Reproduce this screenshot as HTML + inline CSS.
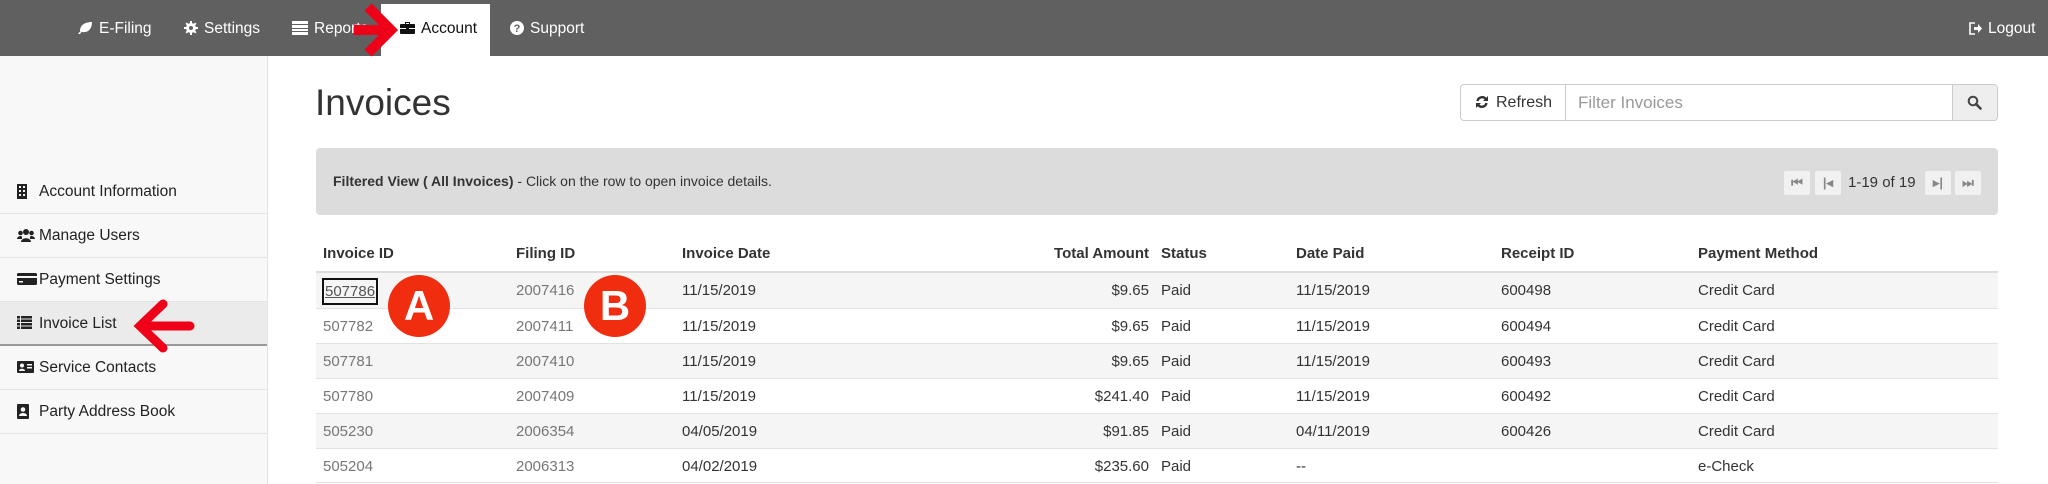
<!DOCTYPE html>
<html><head><meta charset="utf-8"><style>
*{margin:0;padding:0;box-sizing:border-box}
body{width:2048px;height:484px;overflow:hidden;background:#fff;font-family:"Liberation Sans",Arial,sans-serif;color:#333;position:relative}
.abs{position:absolute}
.nav{left:0;top:0;width:2048px;height:56px;background:#606060}
.ni{position:absolute;top:0;height:56px;line-height:58px;color:#fff;font-size:15.5px;white-space:nowrap}
.ni svg{vertical-align:-2px;margin-right:6px}
.acct{left:381px;top:4px;width:109px;height:52px;background:#fff}
.side{left:0;top:56px;width:268px;height:428px;background:#f8f8f8;border-right:1px solid #e3e3e3}
.si{position:absolute;left:0;width:267px;height:44px;border-bottom:1px solid #e3e3e3;font-size:15.5px;color:#222;line-height:44px;padding-left:39px}
.si svg{position:absolute;left:17px;top:14px}
.th{position:absolute;top:245px;font-size:15px;font-weight:bold;color:#333}
.row{position:absolute;left:316px;width:1682px;height:35px;border-top:1px solid #e2e2e2;font-size:15px;line-height:35px}
.row span{position:absolute;top:0}
.g{color:#777}
.pb{position:absolute;top:171px;width:26px;height:24px;background:#f1f1f1;border-radius:2px;color:#888;font-size:13px;line-height:24px;text-align:center;font-weight:bold}
.badge{position:absolute;width:62px;height:62px;border-radius:50%;background:#f02d0e;color:#fff;font-weight:bold;font-size:42px;text-align:center;line-height:62px}
</style></head><body>
<div class="abs nav"></div>
<div class="abs acct"></div>
<div class="ni" style="left:77px"><svg width="16" height="14" viewBox="0 0 16 14"><path d="M1 13C4 9 8 6 12 5C8 7 5 10 3 13ZM3 10C3 4 8 1 15 1C15 8 11 12 5 11Z" fill="#fff"/></svg>E-Filing</div>
<div class="ni" style="left:184px"><svg width="14" height="14" viewBox="0 0 14 14"><circle cx="7" cy="7" r="5" fill="#fff"/><path d="M6 0h2v14h-2zM0 6h14v2h-14z" fill="#fff"/><path d="M1.5 2.9l1.4-1.4 9.6 9.6-1.4 1.4zM11.1 1.5l1.4 1.4-9.6 9.6-1.4-1.4z" fill="#fff"/><circle cx="7" cy="7" r="2" fill="#606060"/></svg>Settings</div>
<div class="ni" style="left:292px"><svg width="16" height="14" viewBox="0 0 16 14"><path d="M0 0h16v3H0zM0 4h16v3H0zM0 8h16v2H0zM0 11h16v3H0z" fill="#fff"/></svg>Reports</div>
<div class="ni" style="left:400px;color:#111"><svg width="15" height="14" viewBox="0 0 15 14"><path d="M5 1h5v2H9V2H6v1H5z" fill="#111"/><rect x="0" y="3" width="15" height="10" rx="1" fill="#111"/><rect x="0" y="7" width="15" height="1" fill="#fff"/><rect x="6" y="6" width="3" height="3" fill="#111"/></svg>Account</div>
<div class="ni" style="left:510px"><svg width="14" height="14" viewBox="0 0 14 14"><circle cx="7" cy="7" r="7" fill="#fff"/><text x="7" y="11" font-size="11" font-weight="bold" text-anchor="middle" fill="#606060" font-family="Liberation Sans">?</text></svg>Support</div>
<div class="ni" style="left:1969px"><svg width="13" height="13" viewBox="0 0 13 13"><path d="M6 1H1v11h5" stroke="#fff" stroke-width="1.6" fill="none"/><path d="M5 5h4V2l4 4.5-4 4.5V8H5z" fill="#fff"/></svg>Logout</div>
<svg class="abs" style="left:352px;top:0" width="52" height="60"><path d="M2 30H36M16 7L39 30L16 53" stroke="#f00018" stroke-width="10" fill="none"/></svg>

<div class="abs side"></div>
<div class="si" style="top:170px"><svg width="10" height="16" viewBox="0 0 10 16"><rect width="10" height="15" fill="#222"/><path d="M2 2h2v2H2zM6 2h2v2H6zM2 6h2v2H2zM6 6h2v2H6zM2 10h2v2H2zM6 10h2v2H6z" fill="#f8f8f8"/></svg>Account Information</div>
<div class="si" style="top:214px"><svg width="18" height="14" viewBox="0 0 18 14"><circle cx="9" cy="4" r="3" fill="#222"/><circle cx="3.5" cy="5" r="2.3" fill="#222"/><circle cx="14.5" cy="5" r="2.3" fill="#222"/><path d="M4 14c0-5 10-5 10 0zM0 11c0-3 5-4 5-2v2zM18 11c0-3-5-4-5-2v2z" fill="#222"/></svg>Manage Users</div>
<div class="si" style="top:258px"><svg width="20" height="14" viewBox="0 0 20 14"><rect y="1" width="20" height="12" rx="1.5" fill="#222"/><rect y="4" width="20" height="2" fill="#f8f8f8"/><rect x="2" y="9" width="4" height="1.5" fill="#f8f8f8"/></svg>Payment Settings</div>
<div class="si" style="top:302px;background:#ebebeb;border-bottom:2px solid #999"><svg width="15" height="13" viewBox="0 0 15 13"><path d="M0 0h3v2.5H0zM4 0h11v2.5H4zM0 3.5h3V6H0zM4 3.5h11V6H4zM0 7h3v2.5H0zM4 7h11v2.5H4zM0 10.5h3V13H0zM4 10.5h11V13H4z" fill="#222"/></svg>Invoice List</div>
<div class="si" style="top:346px"><svg width="17" height="14" viewBox="0 0 17 14"><rect y="1" width="17" height="12" rx="1" fill="#222"/><circle cx="5" cy="5.5" r="2" fill="#f8f8f8"/><path d="M2 11c0-3 6-3 6 0z" fill="#f8f8f8"/><rect x="10" y="4" width="5" height="1.5" fill="#f8f8f8"/><rect x="10" y="7" width="5" height="1.5" fill="#f8f8f8"/></svg>Service Contacts</div>
<div class="si" style="top:390px"><svg width="12" height="15" viewBox="0 0 12 15"><rect width="12" height="15" rx="1" fill="#222"/><circle cx="6" cy="5.5" r="2.3" fill="#f8f8f8"/><path d="M2 12c0-4 8-4 8 0z" fill="#f8f8f8"/></svg>Party Address Book</div>
<svg class="abs" style="left:125px;top:298px" width="70" height="56"><path d="M65 28H18M38 6L15 28L38 50" stroke="#f00018" stroke-width="9" fill="none" stroke-linecap="round"/></svg>

<div class="abs" style="left:315px;top:82px;font-size:37px;color:#333">Invoices</div>
<div class="abs" style="left:1460px;top:84px;width:538px;height:37px;border:1px solid #ccc;border-radius:4px;background:#fff"></div>
<div class="abs" style="left:1565px;top:84px;width:1px;height:37px;background:#ccc"></div>
<div class="abs" style="left:1952px;top:85px;width:45px;height:35px;background:#eee;border-left:1px solid #ccc;border-radius:0 3px 3px 0"></div>
<div class="abs" style="left:1475px;top:84px;line-height:37px;font-size:16px;color:#333"><svg width="14" height="14" viewBox="0 0 14 14" style="vertical-align:-2px;margin-right:7px"><path d="M2.5 6A4.7 4.7 0 0 1 11 4.3" stroke="#333" stroke-width="2.4" fill="none"/><path d="M13 1v5H8z" fill="#333"/><path d="M11.5 8A4.7 4.7 0 0 1 3 9.7" stroke="#333" stroke-width="2.4" fill="none"/><path d="M1 13V8h5z" fill="#333"/></svg>Refresh</div>
<div class="abs" style="left:1578px;top:84px;line-height:37px;font-size:17px;color:#999">Filter Invoices</div>
<svg class="abs" style="left:1967px;top:95px" width="15" height="15" viewBox="0 0 15 15"><circle cx="6" cy="6" r="4.3" stroke="#444" stroke-width="2" fill="none"/><path d="M9 9l4.5 4.5" stroke="#444" stroke-width="2.6" stroke-linecap="round"/></svg>

<div class="abs" style="left:316px;top:148px;width:1682px;height:67px;background:#dcdcdc;border-radius:4px"></div>
<div class="abs" style="left:333px;top:173px;font-size:14px;color:#333"><b>Filtered View ( All Invoices)</b> - Click on the row to open invoice details.</div>
<div class="pb" style="left:1784px">⏮</div>
<div class="pb" style="left:1815px">|◂</div>
<div class="abs" style="left:1848px;top:171px;line-height:24px;font-size:15px;color:#333">1-19 of 19</div>
<div class="pb" style="left:1925px">▸|</div>
<div class="pb" style="left:1955px">⏭</div>

<div class="th" style="left:323px">Invoice ID</div>
<div class="th" style="left:516px">Filing ID</div>
<div class="th" style="left:682px">Invoice Date</div>
<div class="th" style="left:1054px;width:95px;text-align:right">Total Amount</div>
<div class="th" style="left:1161px">Status</div>
<div class="th" style="left:1296px">Date Paid</div>
<div class="th" style="left:1501px">Receipt ID</div>
<div class="th" style="left:1698px">Payment Method</div>
<div class="abs" style="left:316px;top:271px;width:1682px;height:2px;background:#ddd"></div>

<div class="row" style="top:273px;background:#f5f5f5;border-top:none"><span style="left:6px;top:5px;line-height:23px;border:2px solid #111;padding:0 1px;text-decoration:underline;color:#555">507786</span><span class="g" style="left:200px">2007416</span><span style="left:366px">11/15/2019</span><span style="right:849px">$9.65</span><span style="left:845px">Paid</span><span style="left:980px">11/15/2019</span><span style="left:1185px">600498</span><span style="left:1382px">Credit Card</span></div>
<div class="row" style="top:308px"><span class="g" style="left:7px">507782</span><span class="g" style="left:200px">2007411</span><span style="left:366px">11/15/2019</span><span style="right:849px">$9.65</span><span style="left:845px">Paid</span><span style="left:980px">11/15/2019</span><span style="left:1185px">600494</span><span style="left:1382px">Credit Card</span></div>
<div class="row" style="top:343px;background:#f5f5f5"><span class="g" style="left:7px">507781</span><span class="g" style="left:200px">2007410</span><span style="left:366px">11/15/2019</span><span style="right:849px">$9.65</span><span style="left:845px">Paid</span><span style="left:980px">11/15/2019</span><span style="left:1185px">600493</span><span style="left:1382px">Credit Card</span></div>
<div class="row" style="top:378px"><span class="g" style="left:7px">507780</span><span class="g" style="left:200px">2007409</span><span style="left:366px">11/15/2019</span><span style="right:849px">$241.40</span><span style="left:845px">Paid</span><span style="left:980px">11/15/2019</span><span style="left:1185px">600492</span><span style="left:1382px">Credit Card</span></div>
<div class="row" style="top:413px;background:#f5f5f5"><span class="g" style="left:7px">505230</span><span class="g" style="left:200px">2006354</span><span style="left:366px">04/05/2019</span><span style="right:849px">$91.85</span><span style="left:845px">Paid</span><span style="left:980px">04/11/2019</span><span style="left:1185px">600426</span><span style="left:1382px">Credit Card</span></div>
<div class="row" style="top:448px;border-bottom:1px solid #e2e2e2"><span class="g" style="left:7px">505204</span><span class="g" style="left:200px">2006313</span><span style="left:366px">04/02/2019</span><span style="right:849px">$235.60</span><span style="left:845px">Paid</span><span style="left:980px">--</span><span style="left:1382px">e-Check</span></div>

<div class="badge" style="left:388px;top:275px">A</div>
<div class="badge" style="left:584px;top:275px">B</div>
</body></html>
